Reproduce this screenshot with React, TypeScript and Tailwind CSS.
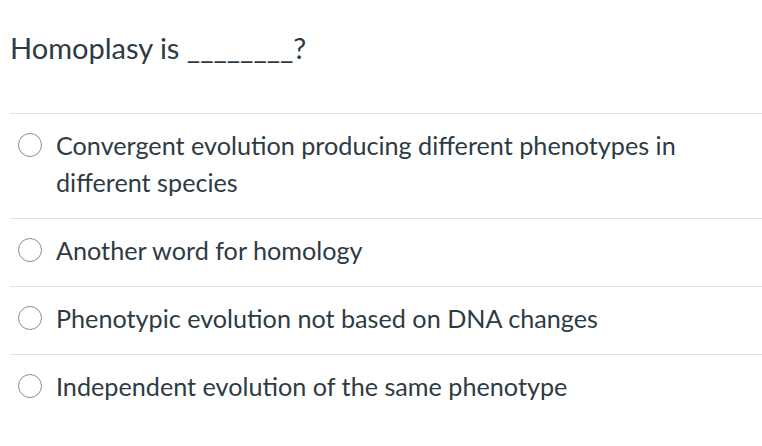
const options = [
  'Convergent evolution producing different phenotypes in different species',
  'Another word for homology',
  'Phenotypic evolution not based on DNA changes',
  'Independent evolution of the same phenotype',
]

function Radio() {
  return (
    <span className="mt-[6px] flex-shrink-0 w-[24px] h-[24px] rounded-full border-[1.5px] border-[#8a8a8a] bg-white" />
  )
}

export default function App() {
  return (
    <div className="w-[762px] h-[446px] bg-white pl-[10px] text-[#2d3b45]" style={{ fontFamily: 'Lato, "Open Sans", sans-serif' }}>
      <div className="h-[113px] pt-[30px] text-[29px] leading-[36px]">Homoplasy is ________?</div>
      {options.map((o) => (
        <div key={o} className="flex gap-[14px] border-t border-[#dfe1e2] pl-[8px] pr-[70px] pt-[13px] pb-[17px]">
          <Radio />
          <p className="text-[25.2px] leading-[37px]">{o}</p>
        </div>
      ))}
    </div>
  )
}
